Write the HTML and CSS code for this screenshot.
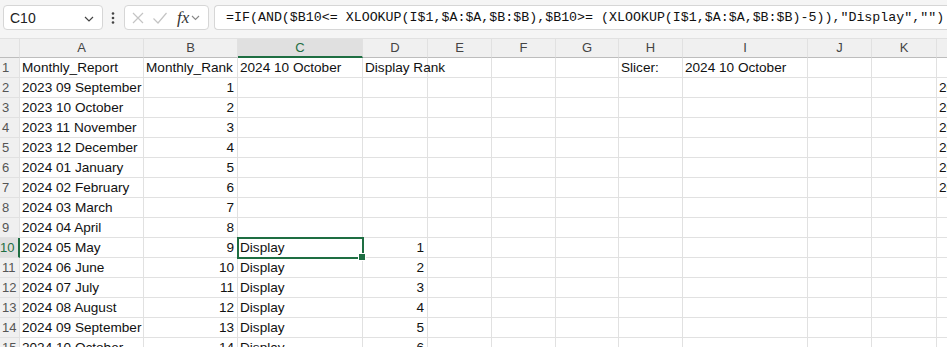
FILE: index.html
```html
<!DOCTYPE html>
<html lang="en">
<head>
    <meta charset="UTF-8">
    <title>Monthly Report</title>
    <link rel="stylesheet" href="styles.css">
</head>
<body>
    <div id="app">
        <div class="toolbar">
            <div class="name-box">
                <span>C10</span>
                <svg class="chev" width="10" height="6" viewBox="0 0 10 6"><path d="M1 1l4 4 4-4" fill="none" stroke="#444" stroke-width="1.2"/></svg>
            </div>
            <div class="dots">
                <svg width="4" height="14" viewBox="0 0 4 14"><circle cx="2" cy="2.5" r="1.3" fill="#444"/><circle cx="2" cy="7" r="1.3" fill="#444"/><circle cx="2" cy="11.5" r="1.3" fill="#444"/></svg>
            </div>
            <div class="fx-box">
                <svg width="14" height="14" viewBox="0 0 14 14"><path d="M2 2l10 10M12 2L2 12" stroke="#c4c4c4" stroke-width="1.2"/></svg>
                <svg width="16" height="14" viewBox="0 0 16 14"><path d="M1.5 7.5l4.5 4.5 8.5-10" fill="none" stroke="#c4c4c4" stroke-width="1.2"/></svg>
                <span class="fx">fx</span>
                <svg width="9" height="6" viewBox="0 0 9 6"><path d="M1 1l3.5 3.5L8 1" fill="none" stroke="#888" stroke-width="1.1"/></svg>
            </div>
            <div class="formula">=IF(AND($B10&lt;= XLOOKUP(I$1,$A:$A,$B:$B),$B10&gt;= (XLOOKUP(I$1,$A:$A,$B:$B)-5)),"Display","")</div>
        </div>

        <div class="sheet" id="sheet"></div>
    </div>

    <script>
        const sheet = document.getElementById('sheet');
        const cols = ['A','B','C','D','E','F','G','H','I','J','K','L'];
        const months = [
            '2023 09 September','2023 10 October','2023 11 November','2023 12 December',
            '2024 01 January','2024 02 February','2024 03 March','2024 04 April',
            '2024 05 May','2024 06 June','2024 07 July','2024 08 August',
            '2024 09 September','2024 10 October'
        ];

        function cell(text, cls) {
            const el = document.createElement('div');
            el.className = 'cell' + (cls ? ' ' + cls : '');
            el.textContent = text || '';
            sheet.appendChild(el);
            return el;
        }

        // header row
        cell('', 'corner');
        cols.forEach(c => cell(c, 'col-head' + (c === 'C' ? ' active' : '')));

        // row 1
        const first = {A: 'Monthly_Report', B: 'Monthly_Rank', C: '2024 10 October', D: 'Display Rank', H: 'Slicer:', I: '2024 10 October'};
        cell('1', 'row-head');
        cols.forEach(c => cell(first[c]));

        // data rows
        months.forEach((m, i) => {
            const row = i + 2;
            const rank = i + 1;
            const shown = rank >= 9;
            cell(String(row), 'row-head' + (row === 10 ? ' active' : ''));
            cols.forEach(c => {
                if (c === 'A') cell(m);
                else if (c === 'B') cell(String(rank), 'num');
                else if (c === 'C') cell(shown ? 'Display' : '', row === 10 ? 'selected' : '');
                else if (c === 'D') cell(shown ? String(rank - 8) : '', 'num');
                else if (c === 'L') cell(row <= 7 ? '2024' : '', 'clip');
                else cell('');
            });
        });
    </script>
</body>
</html>
```

FILE: styles.css
```css
body {
    margin: 0;
    padding: 0;
    width: 947px;
    height: 347px;
    overflow: hidden;
    background-color: #fff;
    font-family: "Liberation Sans", Arial, sans-serif;
}
#app {
    display: flex;
    flex-direction: column;
    height: 100%;
}
.toolbar {
    height: 38px;
    flex: none;
    background-color: #f5f5f5;
    display: flex;
    align-items: flex-start;
    padding: 5px 0 0 3px;
    box-sizing: border-box;
    white-space: nowrap;
}
.name-box {
    width: 100px;
    height: 25px;
    box-sizing: border-box;
    background-color: #fff;
    border: 1px solid #d6d6d6;
    border-radius: 4px;
    display: flex;
    align-items: center;
    justify-content: space-between;
    padding: 0 8px 0 6px;
    font-size: 14px;
    color: #222;
}
.chev {
    margin-top: 2px;
}
.dots {
    width: 20px;
    height: 25px;
    display: flex;
    align-items: center;
    justify-content: center;
}
.fx-box {
    width: 85px;
    height: 25px;
    box-sizing: border-box;
    background-color: #fff;
    border: 1px solid #d6d6d6;
    border-radius: 4px;
    display: flex;
    align-items: center;
    padding: 0 4px 0 6px;
    gap: 7px;
    margin-left: 1px;
}
.fx {
    font-family: "Liberation Serif", serif;
    font-style: italic;
    font-size: 17px;
    color: #333;
    margin-left: 2px;
    margin-right: -5px;
}
.formula {
    margin-left: 5px;
    flex: 1;
    height: 25px;
    box-sizing: border-box;
    background-color: #fff;
    border: 1px solid #d6d6d6;
    border-right: none;
    border-radius: 4px 0 0 4px;
    padding: 0 0 0 11px;
    font-family: "Liberation Mono", monospace;
    font-size: 13.3px;
    line-height: 23px;
    color: #111;
    overflow: hidden;
}
.sheet {
    display: grid;
    grid-template-columns: 20px 124px 94px 125px 65px 64px 64px 63px 64px 125px 64px 65px 40px;
    grid-auto-rows: 20px;
    grid-template-rows: 20px;
    font-size: 13.6px;
    color: #111;
}
.cell {
    box-sizing: border-box;
    border-right: 1px solid #e1e1e1;
    border-bottom: 1px solid #e1e1e1;
    padding: 0 2px;
    line-height: 20px;
    white-space: nowrap;
    overflow: visible;
    position: relative;
}
.num {
    text-align: right;
    padding-right: 3px;
}
.clip {
    overflow: hidden;
}
.corner, .col-head, .row-head {
    background-color: #f0f0f0;
    color: #444;
}
.corner, .col-head {
    border-top: 1px solid #e1e1e1;
    border-bottom: 1px solid #bdbdbd;
    line-height: 18px;
}
.col-head {
    text-align: center;
    font-size: 13px;
}
.row-head {
    text-align: left;
    padding-left: 2px;
    font-size: 13px;
    color: #555;
}
.col-head.active {
    background-color: #e0e0e0;
    color: #1e6e42;
    border-bottom: 2px solid #1e6e42;
}
.row-head.active {
    background-color: #e0e0e0;
    color: #1e6e42;
    border-right: 2px solid #1e6e42;
    padding-left: 0;
}
.selected {
    outline: 2px solid #1e6e42;
    outline-offset: -1px;
    z-index: 1;
}
.selected::after {
    content: "";
    position: absolute;
    right: -4px;
    bottom: -4px;
    width: 6px;
    height: 6px;
    background-color: #1e6e42;
    border: 1px solid #fff;
}
```
